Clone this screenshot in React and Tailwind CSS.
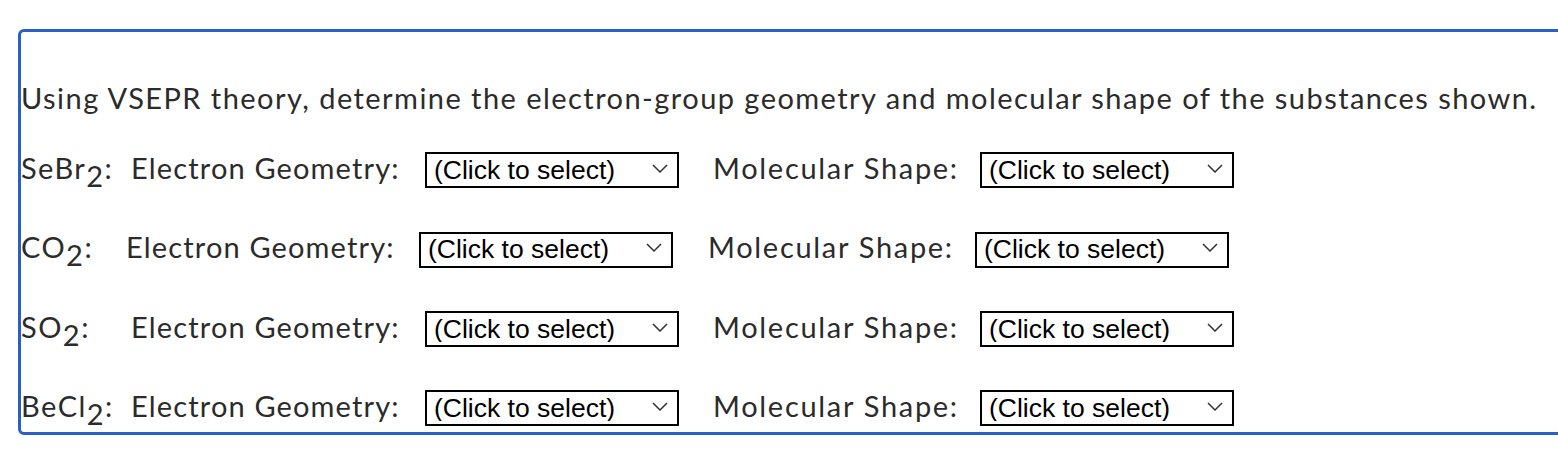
const rows = [
  { name: "SeBr", labelW: "w-[110px]", geoW: "w-[294px]", gap: "ml-[34px]", molW: "w-[267px]" },
  { name: "CO", labelW: "w-[105px]", geoW: "w-[293px]", gap: "ml-[35px]", molW: "w-[267px]" },
  { name: "SO", labelW: "w-[110px]", geoW: "w-[294px]", gap: "ml-[34px]", molW: "w-[267px]" },
  { name: "BeCl", labelW: "w-[110px]", geoW: "w-[294px]", gap: "ml-[34px]", molW: "w-[267px]" },
];

function Picker() {
  return (
    <div className="relative w-[254px] h-[36px] shrink-0 tracking-normal">
      <select
        defaultValue=""
        className="appearance-none w-full h-full border-2 border-black bg-white pl-[7px] text-[26.5px] leading-none text-black font-['Liberation_Sans',Arial,sans-serif] outline-none"
      >
        <option value="">(Click to select)</option>
        <option>linear</option>
        <option>bent</option>
        <option>trigonal planar</option>
        <option>tetrahedral</option>
      </select>
      <svg
        className="absolute right-[11px] top-[14px] pointer-events-none"
        width="16"
        height="9"
        viewBox="0 0 16 9"
        fill="none"
      >
        <polyline points="1,1 8,8 15,1" stroke="#333" strokeWidth="1.5" />
      </svg>
    </div>
  );
}

export default function App() {
  return (
    <div className="bg-white w-[1558px] h-[466px] overflow-hidden pt-[29px] pl-[18px]">
      <div className="w-[1600px] h-[406px] border-[3px] border-[#2a5fc8] rounded-[6px] text-[#2b2b2b] font-['Lato',sans-serif] text-[29px] tracking-[1.45px]">
        <p className="mt-[50px] leading-[32px]">
          Using VSEPR theory, determine the electron-group geometry and molecular shape of the substances shown.
        </p>
        <div className="mt-[36px] flex flex-col gap-[43.3px]">
          {rows.map((r) => (
            <div key={r.name} className="flex items-center h-[36px] leading-[36px]">
              <span className={`${r.labelW} shrink-0`}>
                {r.name}
                <span className="relative top-[8px]">2</span>:
              </span>
              <span className={`${r.geoW} shrink-0 tracking-[1.15px]`}>Electron Geometry:</span>
              <Picker />
              <span className={`${r.gap} ${r.molW} shrink-0 tracking-[1.7px]`}>Molecular Shape:</span>
              <Picker />
            </div>
          ))}
        </div>
      </div>
    </div>
  );
}
